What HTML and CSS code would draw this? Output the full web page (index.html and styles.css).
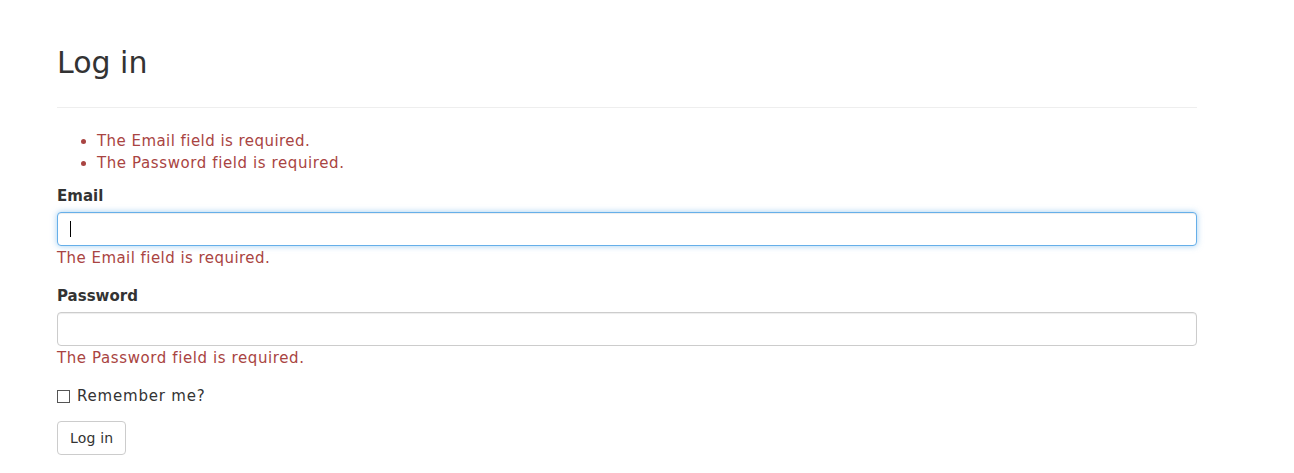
FILE: index.html
```html
<!DOCTYPE html>
<html lang="en">
<head>
<meta charset="utf-8">
<title>Log in</title>
<link rel="stylesheet" href="styles.css">
</head>
<body>
<main class="container">
  <h2 class="title">Log in</h2>
  <hr class="divider">
  <form class="login-form">
    <ul class="summary">
      <li>The Email field is required.</li>
      <li class="wide">The Password field is required.</li>
    </ul>
    <div class="form-group">
      <label class="label" for="email">Email</label>
      <div class="field">
        <input class="input input-focus" id="email" type="email">
        <span class="caret"></span>
      </div>
      <span class="error">The Email field is required.</span>
    </div>
    <div class="form-group">
      <label class="label" for="password">Password</label>
      <div class="field">
        <input class="input" id="password" type="password">
      </div>
      <span class="error wide">The Password field is required.</span>
    </div>
    <div class="form-group check-row">
      <label class="check-label"><input class="check" type="checkbox"> Remember me?</label>
    </div>
    <div class="actions">
      <button class="btn" type="button">Log in</button>
    </div>
  </form>
</main>
</body>
</html>
```

FILE: styles.css
```css
* { box-sizing: border-box; }
html, body { margin: 0; padding: 0; background: #fff; }
body {
  font-family: "DejaVu Sans", "Open Sans", sans-serif;
  font-size: 15px;
  line-height: 22px;
  letter-spacing: 0.45px;
  color: #333;
}
.container {
  width: 1197px;
  padding-left: 57px;
}
.title {
  margin: 0;
  padding-top: 43px;
  font-size: 30px;
  line-height: 40px;
  font-weight: 400;
  letter-spacing: 0;
  color: #333;
}
.divider {
  margin: 24px 0 0;
  border: 0;
  border-top: 1px solid #eee;
  height: 0;
}
.login-form { display: flex; flex-direction: column; }
.summary {
  margin: 22px 0 10px;
  padding-left: 40px;
  color: #a94442;
}
.wide { letter-spacing: 0.6px; }
.form-group {
  display: flex;
  flex-direction: column;
  margin-bottom: 15px;
}
.label {
  font-weight: 700;
  letter-spacing: 0;
  padding-top: 1px;
  margin-bottom: 5px;
}
.field { position: relative; }
.input {
  display: block;
  width: 100%;
  height: 34px;
  padding: 6px 12px;
  border: 1px solid #ccc;
  border-radius: 4px;
  font: inherit;
  background: #fff;
  box-shadow: inset 0 1px 1px rgba(0,0,0,.075);
  outline: none;
}
.input-focus {
  border-color: #66afe9;
  box-shadow: inset 0 1px 1px rgba(0,0,0,.075), 0 0 6px rgba(102,175,233,.6);
}
.caret {
  position: absolute;
  left: 13px;
  top: 9px;
  width: 1px;
  height: 16px;
  background: #000;
}
.error { color: #a94442; padding-top: 1px; }
.check-row { margin-bottom: 14px; padding-top: 1px; }
.check-label { display: flex; align-items: center; gap: 7px; letter-spacing: 0.8px; }
.check {
  appearance: none;
  -webkit-appearance: none;
  width: 13px;
  height: 13px;
  margin: 0;
  border: 1px solid #555;
  background: #fff;
}
.actions { display: flex; }
.btn {
  height: 34px;
  padding: 6px 12px;
  font: inherit;
  font-size: 14px;
  letter-spacing: 0.2px;
  line-height: 20px;
  color: #333;
  background: #fff;
  border: 1px solid #ccc;
  border-radius: 4px;
}
```
